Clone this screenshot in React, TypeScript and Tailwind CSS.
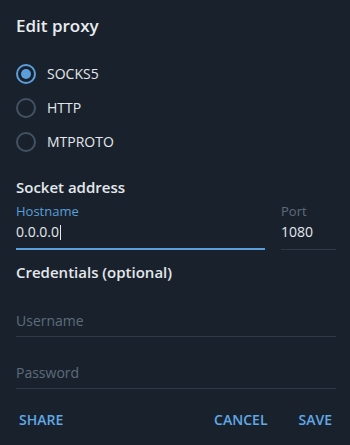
import { useState } from 'react';

type ProxyType = 'SOCKS5' | 'HTTP' | 'MTPROTO';

function Radio({ label, checked, onClick }: { label: string; checked: boolean; onClick: () => void }) {
  return (
    <button type="button" onClick={onClick} className="flex h-[34px] items-center gap-[11px] text-left">
      <span
        className={
          checked
            ? 'flex h-[20px] w-[20px] items-center justify-center rounded-full border-2 border-[#5a9fdb]'
            : 'flex h-[20px] w-[20px] items-center justify-center rounded-full border-2 border-[#435262]'
        }
      >
        {checked && <span className="h-[10px] w-[10px] rounded-full bg-[#5a9fdb]" />}
      </span>
      <span className="text-[14px] leading-[20px] text-[#e4e8ec]">{label}</span>
    </button>
  );
}

export default function App() {
  const [type, setType] = useState<ProxyType>('SOCKS5');

  return (
    <div
      className="flex h-[445px] w-[350px] flex-col bg-[#19222c] pl-4 pr-[14px]"
      style={{ fontFamily: '"Open Sans", "Noto Sans", sans-serif' }}
    >
      <h1 className="mt-[15px] text-[17px] font-semibold leading-[22px] text-[#e9edf0]">Edit proxy</h1>

      <div className="mt-[20px] flex flex-col">
        {(['SOCKS5', 'HTTP', 'MTPROTO'] as ProxyType[]).map((t) => (
          <Radio key={t} label={t} checked={type === t} onClick={() => setType(t)} />
        ))}
      </div>

      <h2 className="mt-[18px] text-[15px] font-semibold leading-[20px] text-[#e4e8ec]">Socket address</h2>

      <div className="mt-[5px] flex gap-4">
        <div className="flex flex-1 flex-col">
          <span className="text-[13px] leading-[18px] text-[#5a9fdb]">Hostname</span>
          <div className="mt-[2px] flex h-[20px] items-center border-b-2 border-[#5a9fdb] pb-[6px] box-content">
            <span className="text-[14px] leading-[20px] text-[#e4e8ec]">0.0.0.0</span>
            <span className="ml-[1px] h-[15px] w-px bg-[#e4e8ec]" />
          </div>
        </div>
        <div className="flex w-[55px] flex-col">
          <span className="text-[13px] leading-[18px] text-[#5d6c7b]">Port</span>
          <div className="mt-[2px] h-[20px] border-b border-[#2e3a46] pb-[7px] box-content text-[14px] leading-[20px] text-[#e4e8ec]">
            1080
          </div>
        </div>
      </div>

      <h2 className="mt-[12px] text-[15px] font-semibold leading-[20px] text-[#e4e8ec]">Credentials (optional)</h2>

      <div className="mt-[29px] border-b border-[#2e3a46] pb-[5px] text-[14px] leading-[20px] text-[#5d6c7b]">
        Username
      </div>
      <div className="mt-[26px] border-b border-[#2e3a46] pb-[5px] text-[14px] leading-[20px] text-[#5d6c7b]">
        Password
      </div>

      <div className="mt-[21px] flex items-center pl-[3px] pr-[4px] text-[14px] font-semibold leading-[20px] text-[#62a8e6]">
        <button type="button">SHARE</button>
        <div className="flex-1" />
        <button type="button">CANCEL</button>
        <button type="button" className="ml-[31px]">SAVE</button>
      </div>
    </div>
  );
}
